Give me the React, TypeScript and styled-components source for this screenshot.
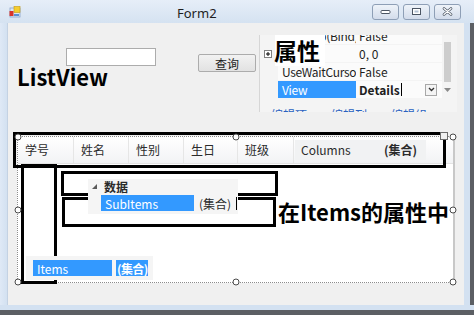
import React from 'react';
import styled, {createGlobalStyle} from 'styled-components';

const GlobalStyle = createGlobalStyle`
  html, body {
    margin: 0;
    padding: 0;
    background: #ffffff;
  }
  body {
    font-family: "Noto Sans CJK SC", "Noto Sans", sans-serif;
    font-size: 12px;
    color: #1e1e1e;
  }
`;

const Window = styled.div`
  width: 474px;
  height: 315px;
  display: flex;
  flex-direction: column;
  background: #dae6f4;
  overflow: hidden;
`;

const TitleBar = styled.div`
  height: 23px;
  flex: none;
  display: flex;
  align-items: center;
  padding: 0 13px 0 9px;
  background: linear-gradient(#e6eef8, #d5e2f1);
`;

const Title = styled.div`
  flex: 1;
  padding: 2px 0 0 156px;
  font-family: "Noto Sans", sans-serif;
  font-size: 13px;
  color: #1e1e1e;
`;

const CaptionButtons = styled.div`
  display: flex;
  gap: 4px;
`;

const CaptionButton = styled.div`
  width: 27px;
  height: 16px;
  box-sizing: border-box;
  display: flex;
  align-items: center;
  justify-content: center;
  border: 1px solid #8e9fb6;
  border-radius: 3px;
  background: linear-gradient(#eef3f9, #d3dceb);
`;

const Body = styled.div`
  flex: 1;
  display: flex;
  min-height: 0;
`;

const LeftFrame = styled.div`
  width: 7px;
  flex: none;
  background: linear-gradient(to right, #dfe9f6, #d3e1f1);
`;

const RightFrame = styled.div`
  width: 10px;
  flex: none;
  background: linear-gradient(to right, #d3e1f1 0 6px, #5c5f64 6px);
`;

const BottomFrame = styled.div`
  height: 10px;
  flex: none;
  background: linear-gradient(to bottom, #d3e1f1 0 5px, #5c5f64 5px);
`;

const Client = styled.div`
  flex: 1;
  position: relative;
  background: #f0f0f0;
  border-left: 1px solid #c4d2e3;
`;

// controls on the designer surface: their place is the content
type PosProps = { $x: number; $y: number };

const TextBox = styled.div<PosProps>`
  position: absolute;
  left: ${p => p.$x}px;
  top: ${p => p.$y}px;
  width: 90px;
  height: 18px;
  box-sizing: border-box;
  background: #ffffff;
  border: 1px solid #acacac;
`;

const PushButton = styled.div<PosProps>`
  position: absolute;
  left: ${p => p.$x}px;
  top: ${p => p.$y}px;
  width: 58px;
  height: 18px;
  box-sizing: border-box;
  display: flex;
  align-items: center;
  justify-content: center;
  border: 1px solid #acacac;
  border-radius: 2px;
  background: linear-gradient(#f2f2f2, #e2e2e2);
  font-size: 12px;
`;

const BigNote = styled.div<PosProps & { $size: number }>`
  position: absolute;
  left: ${p => p.$x}px;
  top: ${p => p.$y}px;
  font-size: ${p => p.$size}px;
  line-height: ${p => p.$size}px;
  font-weight: 700;
  color: #000000;
  white-space: nowrap;
`;

const PanelTitle = styled.span`
  margin-bottom: 4px;
  font-size: 23px;
  line-height: 23px;
  font-weight: 700;
  color: #000000;
`;

/* property grid snippet */
const PropPanel = styled.div<PosProps>`
  position: absolute;
  left: ${p => p.$x}px;
  top: ${p => p.$y}px;
  width: 197px;
  height: 77px;
  display: flex;
  flex-direction: column;
  overflow: hidden;
  background: #f4f4f4;
  border-left: 1px solid #d6d6d6;
`;

const PropBody = styled.div`
  display: flex;
  margin-top: -8px;
`;

const PropGrid = styled.div`
  flex: 1;
  display: flex;
  flex-direction: column;
`;

const PropRow = styled.div`
  height: 18px;
  display: grid;
  grid-template-columns: 18px 78px 1fr;
  align-items: stretch;
`;

const PropName = styled.div<{ $selected?: boolean }>`
  grid-column: 2;
  margin: 0 0 1px;
  padding-left: 4px;
  display: flex;
  align-items: center;
  overflow: hidden;
  white-space: nowrap;
  letter-spacing: -0.3px;
  background: ${p => p.$selected ? '#3399ff' : '#fbfbfb'};
  color: ${p => p.$selected ? '#ffffff' : '#1e1e1e'};
`;

const PropValue = styled.div<{ $bold?: boolean }>`
  margin: 0 0 1px;
  padding-left: 3px;
  display: flex;
  align-items: center;
  white-space: nowrap;
  background: #fbfbfb;
  font-weight: ${p => p.$bold ? 700 : 400};
`;

const Caret = styled.span`
  display: inline-block;
  width: 1px;
  height: 13px;
  margin-left: 1px;
  background: #000000;
`;

const DropButton = styled.div`
  width: 12px;
  height: 12px;
  box-sizing: border-box;
  margin-left: auto;
  margin-right: 5px;
  display: flex;
  align-items: center;
  justify-content: center;
  border: 1px solid #a8a8a8;
  background: #f4f4f4;
`;

const ScrollTrack = styled.div`
  width: 15px;
  flex: none;
  padding: 15px 0 0 2px;
  box-sizing: border-box;
  display: flex;
  flex-direction: column;
  gap: 6px;
`;

const ScrollThumb = styled.div`
  width: 7px;
  height: 40px;
  background: #cdcdcd;
`;

const LinkRow = styled.div`
  display: flex;
  gap: 14px;
  padding: 7px 0 0 11px;
  color: #2a62c0;
  font-size: 12px;
  white-space: nowrap;
`;

const TitleCover = styled.div`
  position: absolute;
  left: 4px;
  top: 0;
  width: 61px;
  height: 31px;
  display: flex;
  align-items: flex-end;
  gap: 2px;
  background: linear-gradient(to right, transparent 0 11px, #ffffff 11px);
`;

/* list view on the designer surface */
const ListFrame = styled.div<PosProps & { $w: number; $h: number }>`
  position: absolute;
  left: ${p => p.$x}px;
  top: ${p => p.$y}px;
  width: ${p => p.$w}px;
  height: ${p => p.$h}px;
  box-sizing: border-box;
  background: #ffffff;
  border: 1px dotted #8c8c8c;
  border-right: 2px solid #c8c8c8;
`;

const Header = styled.div`
  height: 26px;
  display: flex;
  background: linear-gradient(#ffffff, #f2f3f5);
  border-bottom: 1px solid #e3e3e3;
`;

const HeaderCell = styled.div<{ $w: number }>`
  width: ${p => p.$w}px;
  box-sizing: border-box;
  padding: 0 0 2px 7px;
  display: flex;
  align-items: center;
  border-right: 1px solid #e6e6e6;
  color: #2b2b2b;
`;

type HandleProps = { $h: number; $v: number };
const Handle = styled.div<HandleProps>`
  position: absolute;
  left: ${p => p.$h}%;
  top: ${p => p.$v}%;
  width: 7px;
  height: 7px;
  box-sizing: border-box;
  transform: translate(-50%, -50%);
  border: 1px solid #4a4a4a;
  border-radius: 50%;
  background: #ffffff;
  z-index: 5;
`;

const SmartTag = styled.div`
  position: absolute;
  right: 5px;
  top: -5px;
  width: 8px;
  height: 8px;
  box-sizing: border-box;
  border: 1px solid #6c6c6c;
  background: #f0f0f0;
  z-index: 5;
`;

/* annotations drawn over the screenshot */
const Frame = styled.div<PosProps & { $w: number; $h: number }>`
  position: absolute;
  left: ${p => p.$x}px;
  top: ${p => p.$y}px;
  width: ${p => p.$w}px;
  height: ${p => p.$h}px;
  box-sizing: border-box;
  border: 3px solid #000000;
`;

const Snippet = styled.div<PosProps & { $w: number; $h: number; $bg?: string }>`
  position: absolute;
  left: ${p => p.$x}px;
  top: ${p => p.$y}px;
  width: ${p => p.$w}px;
  height: ${p => p.$h}px;
  box-sizing: border-box;
  background: ${p => p.$bg ?? '#f5f5f5'};
  display: flex;
  flex-direction: column;
`;

const SnippetRow = styled.div<{ $h: number; $pad: number }>`
  height: ${p => p.$h}px;
  padding-left: ${p => p.$pad}px;
  display: flex;
  align-items: center;
  gap: 4px;
  white-space: nowrap;
`;

const Highlight = styled.div<{ $w: number; $bold?: boolean }>`
  width: ${p => p.$w}px;
  height: 16px;
  box-sizing: border-box;
  padding-left: ${p => p.$bold ? 1 : 4}px;
  display: flex;
  align-items: center;
  background: #3399ff;
  color: #ffffff;
  font-weight: ${p => p.$bold ? 700 : 400};
  letter-spacing: ${p => p.$bold ? '-0.6px' : '0'};
  overflow: hidden;
`;

const Plain = styled.span<{ $bold?: boolean; $w?: number }>`
  display: inline-block;
  width: ${p => p.$w ? `${p.$w}px` : 'auto'};
  font-weight: ${p => p.$bold ? 700 : 400};
  color: #2b2b2b;
`;

const AppIcon = () => (
    <svg width="12" height="12" viewBox="0 0 12 12">
        <rect x="1" y="2" width="10" height="9" fill="#dbe7f5" stroke="#8aa4c8" strokeWidth="0.8"/>
        <rect x="5" y="0.5" width="6" height="6" fill="#f4cd2f" stroke="#c79a10" strokeWidth="0.6"/>
        <rect x="0.5" y="5" width="4" height="5" fill="#d8342a"/>
        <rect x="5" y="8" width="5" height="2" fill="#5b8fd0"/>
    </svg>
);

const MinGlyph = () => (
    <svg width="11" height="6" viewBox="0 0 11 6">
        <rect x="1" y="1.5" width="9" height="3" rx="1" fill="#ffffff" stroke="#4b5563"/>
    </svg>
);

const MaxGlyph = () => (
    <svg width="11" height="9" viewBox="0 0 11 9">
        <rect x="1.5" y="1.5" width="8" height="6" fill="#ffffff" stroke="#4b5563"/>
        <rect x="3.5" y="3.5" width="4" height="2" fill="#b4c2d4"/>
    </svg>
);

const CloseGlyph = () => (
    <svg width="11" height="9" viewBox="0 0 11 9">
        <path d="M2 1.5 L9 7.5 M9 1.5 L2 7.5" stroke="#4b5563" strokeWidth="2.6" strokeLinecap="round"/>
        <path d="M2 1.5 L9 7.5 M9 1.5 L2 7.5" stroke="#ffffff" strokeWidth="1.2" strokeLinecap="round"/>
    </svg>
);

const ExpandBox = () => (
    <svg width="8" height="8" viewBox="0 0 8 8" style={{marginBottom: 8}}>
        <rect x="0.5" y="0.5" width="7" height="7" fill="#ffffff" stroke="#808080"/>
        <path d="M2 4 H6 M4 2 V6" stroke="#000000"/>
    </svg>
);

const Chevron = () => (
    <svg width="7" height="5" viewBox="0 0 7 5">
        <path d="M1 1 L3.5 3.5 L6 1" stroke="#333333" strokeWidth="1.4" fill="none"/>
    </svg>
);

const DownArrow = () => (
    <svg width="7" height="4" viewBox="0 0 7 4">
        <path d="M0 0 H7 L3.5 4 Z" fill="#8a8a8a"/>
    </svg>
);

const CollapseTri = () => (
    <svg width="5" height="5" viewBox="0 0 5 5">
        <path d="M5 0 V5 H0 Z" fill="#5a5a5a"/>
    </svg>
);

const columns = [
    {text: '学号', w: 56},
    {text: '姓名', w: 55},
    {text: '性别', w: 55},
    {text: '生日', w: 54},
    {text: '班级', w: 56},
];

const handles = [
    [0, 0], [50, 0], [100, 0],
    [0, 50], [100, 50],
    [0, 100], [50, 100], [100, 100],
];

const App: React.FC = () => {
    return (
        <>
            <GlobalStyle/>
            <Window>
                <TitleBar>
                    <AppIcon/>
                    <Title>Form2</Title>
                    <CaptionButtons>
                        <CaptionButton><MinGlyph/></CaptionButton>
                        <CaptionButton><MaxGlyph/></CaptionButton>
                        <CaptionButton><CloseGlyph/></CaptionButton>
                    </CaptionButtons>
                </TitleBar>
                <Body>
                    <LeftFrame/>
                    <Client>
                        <TextBox $x={58} $y={25}/>
                        <PushButton $x={190} $y={31}>查询</PushButton>
                        <BigNote $x={9} $y={42} $size={22}>ListView</BigNote>

                        <PropPanel $x={251} $y={12}>
                            <PropBody>
                                <PropGrid>
                                    <PropRow>
                                        <PropName>TabStop(Bind)</PropName>
                                        <PropValue>False</PropValue>
                                    </PropRow>
                                    <PropRow>
                                        <PropName>Margin</PropName>
                                        <PropValue>0, 0</PropValue>
                                    </PropRow>
                                    <PropRow>
                                        <PropName>UseWaitCurso</PropName>
                                        <PropValue>False</PropValue>
                                    </PropRow>
                                    <PropRow>
                                        <PropName $selected>View</PropName>
                                        <PropValue $bold>
                                            Details<Caret/>
                                            <DropButton><Chevron/></DropButton>
                                        </PropValue>
                                    </PropRow>
                                </PropGrid>
                                <ScrollTrack>
                                    <ScrollThumb/>
                                    <DownArrow/>
                                </ScrollTrack>
                            </PropBody>
                            <LinkRow>
                                <span>编辑项...</span>
                                <span>编辑列...</span>
                                <span>编辑组...</span>
                            </LinkRow>
                            <TitleCover>
                                <ExpandBox/>
                                <PanelTitle>属性</PanelTitle>
                            </TitleCover>
                        </PropPanel>

                        <ListFrame $x={9} $y={113} $w={438} $h={147}>
                            <Header>
                                {columns.map(c => (
                                    <HeaderCell key={c.text} $w={c.w}>{c.text}</HeaderCell>
                                ))}
                            </Header>
                            <SmartTag/>
                            {handles.map(([h, v]) => (
                                <Handle key={`${h}-${v}`} $h={h} $v={v}/>
                            ))}
                        </ListFrame>

                        <Snippet $x={287} $y={117} $w={131} $h={20} $bg="#f1f2f3">
                            <SnippetRow $h={19} $pad={6}>
                                <Plain $w={79}>Columns</Plain>
                                <Plain $bold>(集合)</Plain>
                            </SnippetRow>
                        </Snippet>

                        <Frame $x={5} $y={109} $w={433} $h={36}/>
                        <Frame $x={13} $y={141} $w={36} $h={120}/>
                        <Frame $x={53} $y={148} $w={217} $h={25}/>
                        <Frame $x={54} $y={174} $w={214} $h={30}/>

                        <Snippet $x={80} $y={156} $w={150} $h={35}>
                            <SnippetRow $h={15} $pad={4}>
                                <CollapseTri/>
                                <Plain $bold style={{marginLeft: 3}}>数据</Plain>
                            </SnippetRow>
                            <SnippetRow $h={18} $pad={13}>
                                <Highlight $w={93}>SubItems</Highlight>
                                <Plain style={{marginLeft: 1}}>(集合)</Plain>
                                <Caret/>
                            </SnippetRow>
                        </Snippet>

                        <BigNote $x={270} $y={177} $size={22}>在Items的属性中</BigNote>

                        <Snippet $x={18} $y={233} $w={127} $h={24}>
                            <SnippetRow $h={24} $pad={7}>
                                <Highlight $w={79}>Items</Highlight>
                                <Highlight $w={32} $bold>(集合)</Highlight>
                            </SnippetRow>
                        </Snippet>
                    </Client>
                    <RightFrame/>
                </Body>
                <BottomFrame/>
            </Window>
        </>
    );
};

export default App;
